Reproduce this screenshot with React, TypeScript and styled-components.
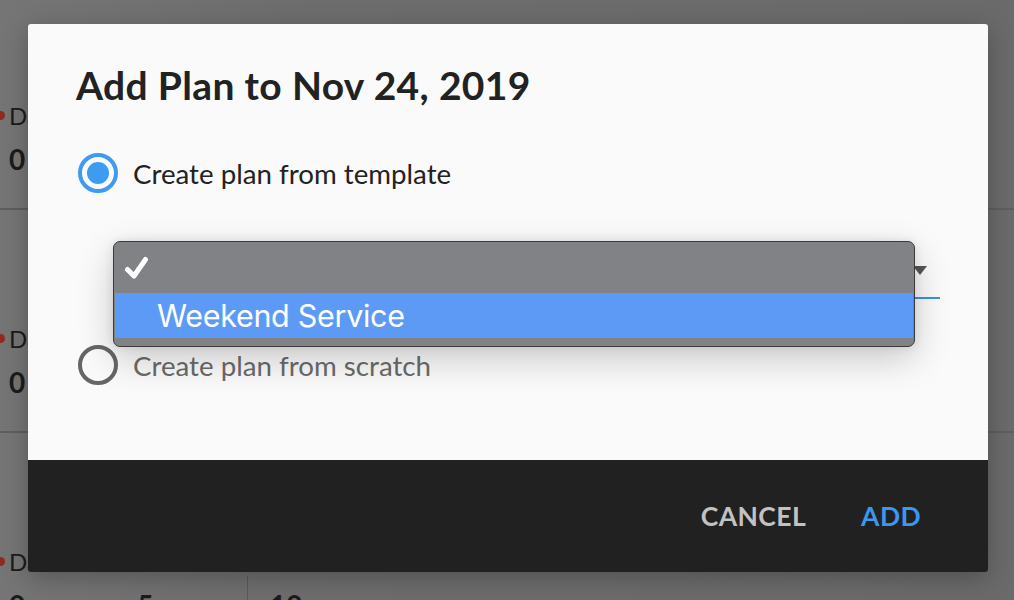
import React from "react";
import styled, { createGlobalStyle } from "styled-components";

const Global = createGlobalStyle`
  html, body { margin: 0; padding: 0; }
  body {
    width: 1014px;
    height: 600px;
    overflow: hidden;
    background: #6c6c6c;
    font-family: "Lato", "Open Sans", sans-serif;
  }
`;

const Page = styled.div`
  position: relative;
  width: 1014px;
  height: 600px;
  overflow: hidden;
  background: linear-gradient(90deg, #757575 0%, #6d6d6d 30%, #6a6a6a 100%);
`;

const BgList = styled.div`
  display: flex;
  flex-direction: column;
  margin-top: -13px;
`;

const BgRow = styled.div<{ $last?: boolean }>`
  height: 223px;
  box-sizing: border-box;
  border-bottom: ${(p) => (p.$last ? "none" : "2px solid #5e5e5e")};
  display: flex;
  flex-direction: column;
  padding-top: 115px;
`;

const BgLabel = styled.div`
  display: flex;
  align-items: center;
  gap: 4px;
  margin-left: -4px;
  font-size: 24px;
  color: #1b1b1b;
  height: 26px;
`;

const Dot = styled.span`
  width: 9px;
  height: 9px;
  border-radius: 50%;
  background: #8e2a22;
`;

const BgNums = styled.div`
  display: grid;
  grid-template-columns: 247px 200px;
  margin-top: 2px;
  font-size: 28px;
  font-weight: 700;
  color: #1b1b1b;
`;

const BgCell = styled.div<{ $divider?: boolean }>`
  display: flex;
  gap: 112px;
  padding-left: ${(p) => (p.$divider ? "22px" : "9px")};
  border-left: ${(p) => (p.$divider ? "1px solid #5a5a5a" : "none")};
  height: 60px;
  padding-top: 12px;
`;

const Modal = styled.div`
  position: absolute;
  left: 28px;
  top: 24px;
  width: 960px;
  height: 548px;
  border-radius: 3px;
  display: flex;
  flex-direction: column;
  box-shadow: 0 6px 24px rgba(0, 0, 0, 0.25);
`;

const Body = styled.div`
  flex: 1;
  background: #fafafa;
  border-radius: 3px 3px 0 0;
  padding: 37px 48px 0 48px;
  display: flex;
  flex-direction: column;
`;

const Title = styled.h1`
  margin: 0;
  font-family: "Lato", sans-serif;
  font-weight: 700;
  font-size: 39px;
  line-height: 48px;
  color: #222;
  letter-spacing: 0.35px;
`;

const RadioRow = styled.label<{ $muted?: boolean; $gapTop: number }>`
  display: flex;
  align-items: center;
  gap: 15px;
  margin-left: 2px;
  margin-top: ${(p) => p.$gapTop}px;
  font-size: 27.7px;
  color: ${(p) => (p.$muted ? "#6a6a6a" : "#222")};
  height: 44px;
`;

const RadioCircle = styled.span<{ $on?: boolean }>`
  width: 40px;
  height: 40px;
  box-sizing: border-box;
  border-radius: 50%;
  border: 4px solid ${(p) => (p.$on ? "#3d9bf2" : "#666")};
  display: flex;
  align-items: center;
  justify-content: center;
  &::after {
    content: "";
    display: ${(p) => (p.$on ? "block" : "none")};
    width: 22px;
    height: 22px;
    border-radius: 50%;
    background: #3d9bf2;
  }
`;

const SelectWrap = styled.div`
  position: relative;
  margin: 40px 0 0 38px;
  width: 826px;
  height: 62px;
  border-bottom: 2px solid #3d8fe8;
`;

const Arrow = styled.span`
  position: absolute;
  right: 13px;
  top: 31px;
  width: 0;
  height: 0;
  border-left: 7px solid transparent;
  border-right: 7px solid transparent;
  border-top: 9px solid #555;
`;

const Popup = styled.div`
  position: absolute;
  left: 113px;
  top: 241px;
  width: 802px;
  height: 106px;
  box-sizing: border-box;
  border-radius: 7px;
  border: 1px solid #3b3b3b;
  background: #818285;
  box-shadow: 0 12px 36px rgba(0, 0, 0, 0.2), 0 0 10px rgba(0, 0, 0, 0.1);
  display: flex;
  flex-direction: column;
  padding: 0 1px;
  overflow: hidden;
`;

const Option = styled.div<{ $active?: boolean }>`
  height: ${(p) => (p.$active ? "45px" : "51px")};
  display: flex;
  align-items: center;
  padding-left: ${(p) => (p.$active ? "42px" : "9px")};
  background: ${(p) => (p.$active ? "#5d9af5" : "transparent")};
  color: #fff;
  font-family: "Inter", "Noto Sans", sans-serif;
  font-size: 30.5px;
  letter-spacing: -0.3px;
`;

const Footer = styled.div`
  height: 112px;
  background: #212121;
  border-radius: 0 0 3px 3px;
  display: flex;
  align-items: center;
  justify-content: flex-end;
  gap: 55px;
  padding-right: 67px;
`;

const FooterButton = styled.button<{ $primary?: boolean }>`
  background: none;
  border: none;
  padding: 0;
  font-family: "Lato", sans-serif;
  font-weight: 700;
  font-size: 26.5px;
  letter-spacing: 0.4px;
  color: ${(p) => (p.$primary ? "#3b97ef" : "#c2c2c2")};
  text-transform: uppercase;
`;

function Check() {
  return (
    <svg width="26" height="24" viewBox="0 0 26 24">
      <path
        d="M3.5 13.5 L10 20 L21.5 3.5"
        fill="none"
        stroke="#fff"
        strokeWidth="5"
        strokeLinecap="round"
        strokeLinejoin="round"
      />
    </svg>
  );
}

export default function App() {
  return (
    <Page>
      <Global />
      <BgList>
        <BgRow>
          <BgLabel>
            <Dot />
            Da
          </BgLabel>
          <BgNums>
            <BgCell>0</BgCell>
          </BgNums>
        </BgRow>
        <BgRow>
          <BgLabel>
            <Dot />
            Da
          </BgLabel>
          <BgNums>
            <BgCell>0</BgCell>
          </BgNums>
        </BgRow>
        <BgRow $last>
          <BgLabel>
            <Dot />
            Da
          </BgLabel>
          <BgNums>
            <BgCell>
              <span>0</span>
              <span>5</span>
            </BgCell>
            <BgCell $divider>10</BgCell>
          </BgNums>
        </BgRow>
      </BgList>
      <Modal>
        <Body>
          <Title>Add Plan to Nov 24, 2019</Title>
          <RadioRow $gapTop={42}>
            <RadioCircle $on />
            Create plan from template
          </RadioRow>
          <SelectWrap>
            <Arrow />
          </SelectWrap>
          <RadioRow $muted $gapTop={44}>
            <RadioCircle />
            Create plan from scratch
          </RadioRow>
        </Body>
        <Footer>
          <FooterButton>Cancel</FooterButton>
          <FooterButton $primary>Add</FooterButton>
        </Footer>
      </Modal>
      <Popup>
        <Option>
          <Check />
        </Option>
        <Option $active>Weekend Service</Option>
      </Popup>
    </Page>
  );
}
